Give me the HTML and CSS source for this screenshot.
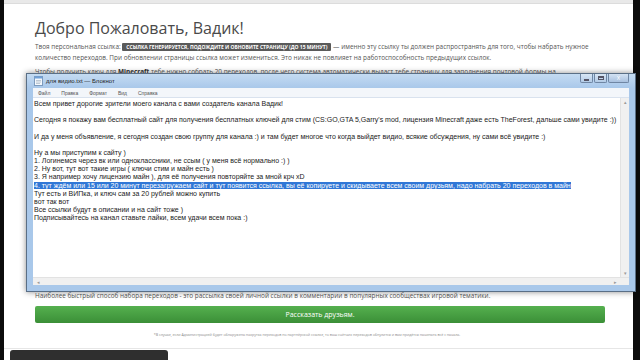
FILE: index.html
```html
<!DOCTYPE html>
<html lang="ru">
<head>
  <meta charset="UTF-8" />
  <meta name="viewport" content="width=device-width, initial-scale=1.0" />
  <title>Добро Пожаловать</title>
  <link rel="stylesheet" href="styles.css">
</head>
<body>
  <div class="screen">
    <div class="page">
      <div class="topline"></div>
      <main class="content">
        <h1>Добро Пожаловать, Вадик!</h1>
        <p>Твоя персональная ссылка: <span class="badge">Ссылка генерируется, подождите и обновите страницу (до 15 минут)</span> — именно эту ссылку ты должен распространять для того, чтобы набрать нужное количество переходов. При обновлении страницы ссылка может измениться. Это никак не повлияет на работоспособность предыдущих ссылок.</p>
        <div class="covered">
          <p class="rules">Чтобы получить ключ для <b>Minecraft</b> тебе нужно собрать 20 переходов, после чего система автоматически выдаст тебе страницу для заполнения почтовой формы на</p>
        </div>
        <p>Наиболее быстрый способ набора переходов - это рассылка своей личной ссылки в комментарии в популярных сообществах игровой тематики.</p>
        <button class="share">Рассказать друзьям.</button>
        <p class="note">*В случае, если Администрацией будет обнаружена накрутка переходов по партнёрской ссылке, то ваш счётчик переходов обнулится и вам придётся начинать всё с начала.</p>
      </main>
      <div class="footer">
        <div class="footer-tab"></div>
      </div>
    </div>

    <div class="notepad">
      <div class="np-title">
        <svg class="np-icon" width="9" height="10" viewBox="0 0 9 10">
          <rect x="0.5" y="0.5" width="8" height="9" fill="#f4f8fc" stroke="#7d9bbd"/>
          <rect x="0.5" y="0.5" width="8" height="2" fill="#6fa0d8"/>
          <path d="M2 4.5h5M2 6h5M2 7.5h4" stroke="#9ab" stroke-width="0.6"/>
        </svg>
        <span class="np-name">для видио.txt — Блокнот</span>
        <div class="np-buttons">
          <span class="np-btn"><i class="ico-min"></i></span>
          <span class="np-btn"><i class="ico-max"></i></span>
          <span class="np-btn np-close">X</span>
        </div>
      </div>
      <div class="np-menu">
        <span>Файл</span><span>Правка</span><span>Формат</span><span>Вид</span><span>Справка</span>
      </div>
      <div class="np-body">
        <div class="np-text">
          <div>Всем привет дорогие зрители моего канала с вами создатель канала Вадик!</div>
          <div>&nbsp;</div>
          <div>Сегодня я покажу вам бесплатный сайт для получения бесплатных ключей для стим (CS:GO,GTA 5,Garry's mod, лицензия Minecraft даже есть TheForest, дальше сами увидите :))</div>
          <div>&nbsp;</div>
          <div>И да у меня объявление, я сегодня создан свою группу для канала :) и там будет многое что когда выйдет видио, всякие обсуждения, ну сами всё увидите :)</div>
          <div>&nbsp;</div>
          <div>Ну а мы приступим к сайту )</div>
          <div>1. Логинемся через вк или одноклассники, не ссым ( у меня всё нормально :) )</div>
          <div>2. Ну вот, тут вот такие игры ( ключи стим и майн есть )</div>
          <div>3. Я например хочу лицензию майн ), для её получения повторяйте за мной крч xD</div>
          <div><span class="sel">4. тут ждём или 15 или 20 минут перезагружаем сайт и тут появится ссылка, вы её копируете и скидываете всем своим друзьям, надо набрать 20 переходов в майн</span></div>
          <div>Тут есть и ВИПка, и ключ сам за 20 рублей можно купить</div>
          <div>вот так вот</div>
          <div>Все ссылки будут в описании и на сайт тоже )</div>
          <div>Подписывайтесь на канал ставьте лайки, всем удачи всем пока :)</div>
        </div>
        <div class="np-vscroll">
          <span class="arrow">&#9652;</span>
          <span class="arrow">&#9662;</span>
        </div>
      </div>
      <div class="np-hscroll">
        <span class="arrow">&#9666;</span>
        <span class="arrow">&#9656;</span>
      </div>
    </div>
  </div>
</body>
</html>
```

FILE: styles.css
```css
* {
  margin: 0;
  padding: 0;
  box-sizing: border-box;
}
body {
  width: 640px;
  height: 360px;
  overflow: hidden;
  background: #0c0c0c;
  font-family: 'Open Sans', 'Liberation Sans', sans-serif;
}
.screen {
  position: relative;
  width: 640px;
  height: 360px;
  padding: 0 7px 0 4px;
  background: #0c0c0c;
}
.page {
  height: 100%;
  background: #fff;
  display: flex;
  flex-direction: column;
}
.topline {
  height: 4px;
  background: #e9e9e9;
  border-bottom: 1px solid #dcdcdc;
}
.content {
  flex: 1;
  padding: 14px 24px 0 31px;
  color: #555;
  font-size: 6.4px;
  line-height: 11px;
}
h1 {
  font-family: 'Open Sans', 'Liberation Sans', sans-serif;
  font-weight: 400;
  font-size: 16px;
  line-height: 20px;
  color: #4a4a4a;
  margin-bottom: 3px;
}
.badge {
  display: inline-block;
  background: #5a5a5a;
  color: #fff;
  font-weight: 700;
  font-size: 5px;
  line-height: 8px;
  padding: 0 4px;
  text-transform: uppercase;
  border-radius: 1px;
}
.covered {
  height: 227px;
  padding-top: 3px;
}
.rules {
  text-decoration: underline;
  color: #555;
  white-space: nowrap;
}
.rules b {
  color: #333;
}
.share {
  display: block;
  width: 570px;
  height: 17px;
  margin-top: 5px;
  border: none;
  border-radius: 2px;
  background: linear-gradient(#55b04f, #3b8f37);
  color: #fff;
  font-family: 'Open Sans', 'Liberation Sans', sans-serif;
  font-size: 7px;
}
.note {
  text-align: center;
  font-size: 3.6px;
  line-height: 6px;
  color: #888;
  margin-top: 9px;
  padding-right: 30px;
}
.footer {
  height: 12px;
  border-top: 1px solid #e6e6e6;
  display: flex;
  align-items: flex-end;
  padding-left: 6px;
}
.footer-tab {
  width: 158px;
  height: 10px;
  background: #2f2f2f;
  border-radius: 3px 3px 0 0;
}

/* notepad window over the page */
.notepad {
  position: absolute;
  left: 26px;
  top: 73px;
  width: 610px;
  height: 219px;
  background: #a9c8ea;
  border: 1px solid #5a6f86;
  box-shadow: 0 0 6px rgba(0, 0, 0, 0.45);
  display: flex;
  flex-direction: column;
  padding: 0 6px 6px 6px;
}
.np-title {
  height: 14px;
  display: flex;
  align-items: center;
  gap: 3px;
  background: linear-gradient(#c4dbf2, #a9c8ea);
  margin: 0 -6px 0 -6px;
  padding: 0 6px 0 7px;
}
.np-name {
  flex: 1;
  font-family: 'Liberation Sans', sans-serif;
  font-size: 6px;
  color: #222;
}
.np-buttons {
  display: flex;
  align-self: flex-start;
  gap: 1px;
}
.np-btn {
  width: 13px;
  height: 9px;
  border: 1px solid #6f86a3;
  border-top: none;
  border-radius: 0 0 2px 2px;
  background: linear-gradient(#d8e6f5, #b3cbe6);
  display: flex;
  align-items: center;
  justify-content: center;
}
.np-close {
  width: 21px;
  font-family: 'Liberation Sans', sans-serif;
  font-size: 5px;
  color: #fff;
  background: linear-gradient(#d3e2f3, #a9c1df);
}
.ico-min {
  width: 5px;
  height: 2px;
  background: #fff;
  border: 1px solid #556;
  margin-top: 3px;
}
.ico-max {
  width: 6px;
  height: 4px;
  border: 1px solid #556;
  border-top-width: 2px;
}
.np-menu {
  height: 10px;
  background: #f3f6fa;
  border-bottom: 1px solid #d9e2ee;
  display: flex;
  align-items: center;
  gap: 11px;
  padding-left: 5px;
  font-family: 'Liberation Sans', sans-serif;
  font-size: 5px;
  color: #555;
}
.np-body {
  flex: 1;
  display: flex;
  background: #fff;
  min-height: 0;
}
.np-text {
  flex: 1;
  padding: 2px 0 0 1px;
  font-family: 'Liberation Sans', sans-serif;
  font-size: 7px;
  line-height: 8.15px;
  color: #222;
  white-space: nowrap;
  overflow: hidden;
}
.sel {
  background: #3077d6;
  color: #fff;
}
.np-vscroll {
  width: 9px;
  background: #f0f0f0;
  border-left: 1px solid #e2e2e2;
  display: flex;
  flex-direction: column;
  justify-content: space-between;
  align-items: center;
}
.np-hscroll {
  height: 8px;
  background: #f0f0f0;
  border-top: 1px solid #e2e2e2;
  display: flex;
  justify-content: space-between;
  align-items: center;
  padding: 0 12px 0 4px;
}
.arrow {
  font-size: 5px;
  line-height: 8px;
  color: #999;
}
```
